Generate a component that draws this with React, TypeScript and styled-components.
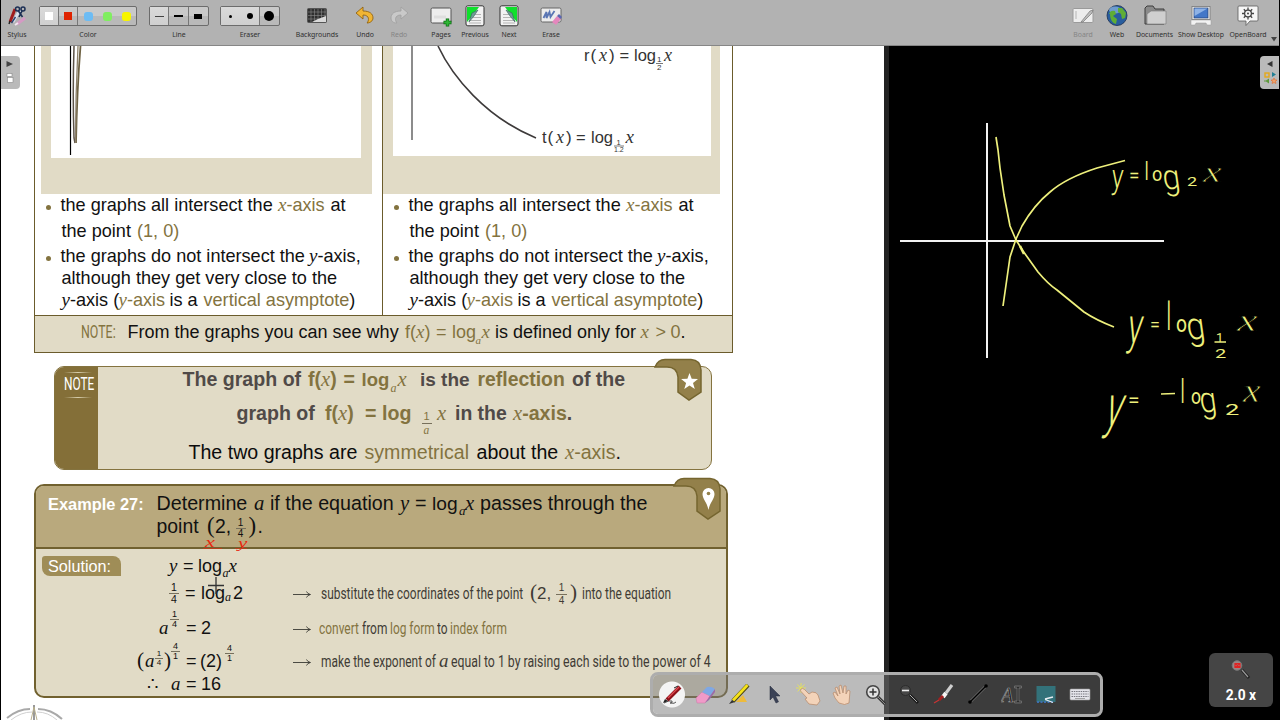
import React from "react";
import styled, { createGlobalStyle } from "styled-components";

const olive = "#83733f";
const sand = "#e1dbc6";
const line = "#6b5c2c";

const Global = createGlobalStyle`
  html, body { margin: 0; padding: 0; background: #000; }
  * { box-sizing: border-box; }
`;

const Screen = styled.div`
  position: relative;
  width: 1280px;
  height: 720px;
  padding: 0 1px;
  overflow: hidden;
  background: #000;
  display: flex;
  flex-direction: column;
  font-family: "Liberation Sans", Arial, sans-serif;
`;

/* ---------- top toolbar ---------- */
const TopBar = styled.header`
  height: 46px;
  flex: none;
  display: flex;
  background: #b2b2b2;
  border-bottom: 1px solid #868686;
`;
const Spacer = styled.div`
  flex: 1;
`;
const Tool = styled.div<{ $w: number; $ml?: number; $dim?: boolean }>`
  width: ${(p) => p.$w}px;
  margin-left: ${(p) => p.$ml ?? 0}px;
  flex: none;
  display: flex;
  flex-direction: column;
  align-items: center;
  color: ${(p) => (p.$dim ? "#858585" : "#303030")};
  font: 6.9px/10px "Noto Sans", sans-serif;
  white-space: nowrap;
`;
const IconSlot = styled.div`
  height: 30px;
  padding-top: 5px;
  svg { display: block; }
`;
const Segments = styled.div`
  height: 20px;
  margin: 6px 0 4px;
  display: flex;
  border: 1px solid #6c6c6c;
  border-radius: 2px;
  background: linear-gradient(#c9c9c9 48%, #b9b9b9 52%);
`;
const Segment = styled.div<{ $on?: boolean; $line?: boolean }>`
  width: 19.4px;
  display: flex;
  align-items: center;
  justify-content: center;
  background: ${(p) => (p.$on ? "linear-gradient(#dadada, #cfcfcf)" : "none")};
  border-right: ${(p) => (p.$line ? "1px solid #777" : "0")};
`;
const Swatch = styled.i<{ $c: string; $w: number; $h: number; $r?: number }>`
  width: ${(p) => p.$w}px;
  height: ${(p) => p.$h}px;
  background: ${(p) => p.$c};
  border-radius: ${(p) => p.$r ?? 0}px;
`;
const Caret = styled.div`
  width: 10px;
  padding: 37px 0 0 2px;
  svg { display: block; }
`;

/* ---------- workspace ---------- */
const Workspace = styled.main`
  flex: 1;
  min-height: 0;
  display: flex;
`;
const Page = styled.section`
  position: relative;
  width: 883px;
  flex: none;
  background: #fff;
  padding-left: 33px;
  overflow: hidden;
`;
const Gutter = styled.div`
  width: 5px;
  flex: none;
  background: #222;
`;
const Board = styled.section`
  flex: 1;
  background: #000;
  svg { display: block; }
`;

const Table = styled.div`
  width: 699px;
  height: 307px;
  border: 1px solid ${line};
  border-top: 0;
`;
const Columns = styled.div`
  display: flex;
  height: 270px;
  border-bottom: 1px solid ${line};
`;
const Column = styled.div<{ $w: number; $pl: number; $divider?: boolean }>`
  width: ${(p) => p.$w}px;
  padding-left: ${(p) => p.$pl}px;
  border-right: ${(p) => (p.$divider ? `1px solid ${line}` : "0")};
`;
const Figure = styled.div<{ $w: number; $b: string }>`
  width: ${(p) => p.$w}px;
  height: 148px;
  border-style: solid;
  border-color: ${sand};
  border-width: ${(p) => p.$b};
  svg { display: block; overflow: visible; }
`;
const PointList = styled.div<{ $pl: number }>`
  padding-left: ${(p) => p.$pl}px;
`;
const Row = styled.div<{ $h: number; $pl?: number; $size?: number; $bold?: boolean; $c?: string }>`
  height: ${(p) => p.$h}px;
  line-height: ${(p) => p.$h}px;
  padding-left: ${(p) => p.$pl ?? 0}px;
  font-size: ${(p) => p.$size ?? 18.1}px;
  font-weight: ${(p) => (p.$bold ? 700 : 400)};
  color: ${(p) => p.$c ?? "#111"};
  display: flex;
  align-items: baseline;
  white-space: pre;
`;
const Seg = styled.span<{ $w?: number; $c?: string; $bold?: boolean; $size?: number }>`
  flex: none;
  width: ${(p) => (p.$w ? `${p.$w}px` : "auto")};
  ${(p) => (p.$c ? `color: ${p.$c};` : "")}
  ${(p) => (p.$bold ? "font-weight: 700;" : "")}
  ${(p) => (p.$size ? `font-size: ${p.$size}px;` : "")}
`;
const Narrow = styled.span<{ $k?: number; $size?: number }>`
  display: inline-block;
  font-family: Roboto, "Liberation Sans", sans-serif;
  font-size: ${(p) => p.$size ?? 15.6}px;
  transform: scaleX(${(p) => p.$k ?? 0.765});
  transform-origin: 0 50%;
`;
const Em = styled.em`
  font-family: "Liberation Serif", "Times New Roman", serif;
  font-weight: 400;
  font-size: 1.05em;
  line-height: 0;
`;
const Sub = styled.em<{ $d?: number; $s?: number }>`
  font-family: "Liberation Serif", "Times New Roman", serif;
  font-weight: 400;
  font-size: ${(p) => p.$s ?? 12}px;
  line-height: 0;
  vertical-align: ${(p) => -(p.$d ?? 5)}px;
`;
const Tall = styled.span`
  display: inline-block;
  line-height: 0;
  font-family: "Liberation Serif", serif;
  font-weight: 400;
  font-size: 1.18em;
`;
const FracBox = styled.span<{ $v: number; $s: number; $w: number; $lh: number }>`
  display: inline-flex;
  flex-direction: column;
  align-items: center;
  width: ${(p) => p.$w}px;
  margin: -20px 0;
  vertical-align: ${(p) => p.$v}px;
  font-size: ${(p) => p.$s}px;
  line-height: ${(p) => p.$lh};
  font-weight: 400;
  color: inherit;
  b { font-weight: 400; align-self: stretch; text-align: center; border-bottom: 1px solid #77705c; }
`;
const Frac = ({ n, d, v = 4, s = 10, w = 10, lh = 1.05 }: { n: React.ReactNode; d: React.ReactNode; v?: number; s?: number; w?: number; lh?: number }) => (
  <FracBox $v={v} $s={s} $w={w} $lh={lh}>
    <b>{n}</b>
    <span>{d}</span>
  </FracBox>
);
const Dot = styled.i`
  flex: none;
  align-self: center;
  width: 5px;
  height: 5px;
  margin: 3px 10px 0 2px;
  border-radius: 50%;
  background: ${olive};
`;
const TableNote = styled.div`
  background: ${sand};
  height: 36px;
`;

const NoteCard = styled.div`
  position: relative;
  width: 658px;
  height: 104px;
  margin: 13px 0 0 20px;
  display: flex;
  border: 1px solid #84733f;
  border-radius: 10px;
  background: ${sand};
`;
const NoteBand = styled.div`
  width: 43px;
  flex: none;
  padding: 5px 0 0 9px;
  border-radius: 9px 0 0 9px;
  background: #846f38;
  color: #fff;
`;
const NoteLabel = styled.div`
  width: 30px;
  height: 26px;
  line-height: 24px;
  background:
    linear-gradient(90deg, transparent, #d8cfae, transparent) 0 0 / 28px 1px no-repeat,
    linear-gradient(90deg, transparent, #d8cfae, transparent) 0 25px / 28px 1px no-repeat;
`;
const NoteBody = styled.div`
  flex: 1;
`;
const Ribbon = styled.svg<{ $r: number }>`
  position: absolute;
  top: -9px;
  right: ${(p) => p.$r}px;
`;

const Example = styled.div`
  position: relative;
  width: 694px;
  height: 214px;
  margin-top: 14px;
  border: 2px solid #71612f;
  border-radius: 10px;
  background: ${sand};
`;
const ExampleHead = styled.div`
  height: 63px;
  padding: 5px 0 0 12px;
  border-bottom: 2px solid #71612f;
  border-radius: 8px 8px 0 0;
  background: #b9a97d;
`;
const Body = styled.div`
  display: flex;
  padding: 3px 0 0 6px;
`;
const Tag = styled.div`
  flex: none;
  width: 79px;
  height: 20px;
  margin-top: 4px;
  padding-left: 6px;
  border-radius: 3px 8px 0 8px;
  background: #9f8d57;
  color: #fff;
  font-size: 16.2px;
  line-height: 20px;
`;
const Work = styled.div`
  flex: 1;
  min-width: 0;
`;
const Overlay = styled.svg<{ $x: number; $y: number }>`
  position: absolute;
  left: ${(p) => p.$x}px;
  top: ${(p) => p.$y}px;
  overflow: visible;
`;

/* ---------- floating parts ---------- */
const SideTab = styled.div<{ $side: "left" | "right" }>`
  position: absolute;
  top: 56px;
  ${(p) => p.$side}: 1px;
  width: 19px;
  height: 33px;
  background: #bababa;
  border-radius: ${(p) => (p.$side === "left" ? "0 4px 4px 0" : "4px 0 0 4px")};
  svg { display: block; }
`;
const Palette = styled.div`
  position: absolute;
  left: 650px;
  top: 672px;
  width: 453px;
  height: 45px;
  padding: 0 2px;
  display: flex;
  align-items: center;
  border-radius: 8px;
  border: 3px solid #adadad;
  background: rgba(120, 120, 120, 0.5);
  background-clip: padding-box;
`;
const PaletteItem = styled.div<{ $on?: boolean }>`
  width: 34px;
  height: 27px;
  flex: none;
  display: flex;
  align-items: center;
  justify-content: center;
  background: ${(p) => (p.$on ? "radial-gradient(circle, #f4f4f4 0 12.5px, transparent 13.5px)" : "none")};
`;
const ZoomBadge = styled.div`
  position: absolute;
  left: 1209px;
  top: 653px;
  width: 64px;
  height: 54px;
  padding-top: 5px;
  display: flex;
  flex-direction: column;
  align-items: center;
  border-radius: 6px;
  background: #454545;
  color: #fff;
  font: 700 13.8px/21px Roboto, sans-serif;
`;

const Ic = ({ w = 22, h = 22, children }: { w?: number; h?: number; children: React.ReactNode }) => (
  <svg width={w} height={h} viewBox={`0 0 ${w} ${h}`} fill="none">
    {children}
  </svg>
);

const StylusIcon = () => (
  <Ic>
    <path d="M4 17 9 4" stroke="#a01c1c" strokeWidth="3" />
    <path d="M3 19 4 16" stroke="#222" strokeWidth="1.4" />
    <path d="m7 17 7-12" stroke="#d9e1ee" strokeWidth="2.6" />
    <path d="m5.500 18 4-6" stroke="#2c3f6e" strokeWidth="1.400" />
    <circle cx="11.500" cy="4" r="2" stroke="#1c2f55" strokeWidth="1.500" />
    <circle cx="17" cy="4" r="2" stroke="#1c2f55" strokeWidth="1.500" />
    <path d="m12.500 6 4 6M16 6l-3 6" stroke="#1c2f55" strokeWidth="1.600" />
    <path d="m11 19 8-6" stroke="#d59ac4" strokeWidth="3.400" />
    <path d="m9 20 3-2" stroke="#f2e6f0" strokeWidth="2" />
  </Ic>
);
const BackgroundsIcon = () => (
  <Ic>
    <rect x="1.500" y="3.500" width="19" height="14" rx="1" fill="#303030" stroke="#555" />
    <path d="M5 4v13M8.500 4v13M12 4v13M15.500 4v13M19 4v13M2 7h18M2 10.500h18M2 14h18" stroke="#8a8a8a" strokeWidth=".6" />
    <path d="m6 17 6-3 8-3v6z" fill="#d9d9d9" />
  </Ic>
);
const UndoIcon = ({ dim }: { dim?: boolean }) => (
  <Ic>
    <path
      d={dim ? "m20 8-7-6v4C6 6 3 9 3 13c0 3 2 5 6 5-2-2-3-8 4-8v4z" : "m2 8 7-6v4c7 0 10 3 10 7 0 3-3 5-6 5 2-2 3-8-4-8v4z"}
      fill={dim ? "#c9c9c9" : "#f0b534"}
      stroke={dim ? "#9e9e9e" : "#8a5a08"}
      strokeWidth=".8"
    />
  </Ic>
);
const PagesIcon = () => (
  <Ic>
    <rect x="1" y="3" width="20" height="15" rx="1.500" fill="#ededed" stroke="#555" />
    <path d="M4 12h12" stroke="#dedede" strokeWidth="3" />
    <path d="M17.500 13.500v8M13.500 17.500h8" stroke="#0c6b12" strokeWidth="3.400" />
    <path d="M17.500 14.200v6.600M14.200 17.500h6.600" stroke="#2fb636" strokeWidth="2" />
  </Ic>
);
const TurnIcon = ({ next }: { next?: boolean }) => (
  <Ic>
    <rect x="2" y=".8" width="18" height="20" rx="1.800" fill="#f2f2f2" stroke="#333" />
    <path d="M5 9.500h12M5 12.500h12M5 15.500h12M5 18h12" stroke="#a5a5a5" strokeWidth=".8" />
    <g transform={next ? "matrix(-1 0 0 1 22 0)" : undefined}>
      <path d="M3 2h12L9 10l-6 7z" fill="#0fe02c" />
      <path d="m5 17 3-9 6-3-4 6z" fill="#6f9d94" stroke="#35635c" strokeWidth=".6" />
    </g>
  </Ic>
);
const EraseIcon = () => (
  <Ic>
    <rect x="1" y="3" width="20" height="14" rx="1.500" fill="#ececec" stroke="#666" />
    <path d="m3.500 13 3-6v6l3-6 1 5 4-6" stroke="#5a76b4" strokeWidth="1.800" />
    <path d="m12 17 5-6 4 3-5 6z" fill="#e487bd" />
    <path d="m17 11 2-2 3 3-1.500 2z" fill="#5b67b0" />
  </Ic>
);
const BoardIcon = () => (
  <Ic>
    <rect x="1" y="3.500" width="20" height="14" rx="1" fill="#ededed" stroke="#9a9a9a" />
    <path d="M4 6v8" stroke="#b5b5b5" />
    <path d="m9 17 9-11 3-1-1 3-9 9z" fill="#bdbdbd" stroke="#777" strokeWidth=".7" />
  </Ic>
);
const WebIcon = () => (
  <Ic>
    <circle cx="11" cy="10.500" r="10" fill="#285d9e" stroke="#1a2f50" strokeWidth=".8" />
    <ellipse cx="9" cy="5" rx="6" ry="3.500" fill="#8bb8e2" opacity=".7" />
    <path d="M3 9c1-3 3-4 6-3l1 3-3 2 4 3-1 5c-4-1-6-5-6-10zM12 3l4 0 4 5-1 5-3 1-1-5-3-2z" fill="#5fae35" />
  </Ic>
);
const DocsIcon = () => (
  <Ic w={24}>
    <path d="M2 19V3l2-2h6l2 3h9v15z" fill="#8a8a8a" stroke="#3c3c3c" />
    <path d="M4 19V9l4-3h15v13z" fill="#cfcfcf" stroke="#777" strokeWidth=".6" />
  </Ic>
);
const DesktopIcon = () => (
  <Ic>
    <path d="M1 15h20v5h-4l-1-2H6l-1 2H1z" fill="#f2f2f2" stroke="#999" strokeWidth=".5" />
    <rect x="2" y="1.500" width="18" height="13" fill="#f2f2f2" stroke="#777" strokeWidth=".8" />
    <rect x="4" y="3" width="14" height="10" fill="#4377c8" stroke="#26406f" strokeWidth=".7" />
    <path d="M4.500 3.500h13L4.500 11z" fill="#8eb2e6" />
  </Ic>
);
const OpenBoardIcon = () => (
  <Ic>
    <path d="M2 1h18q1 0 1 1v13q0 1-1 1h-7l-4 4.500V16H2q-1 0-1-1V2q0-1 1-1z" fill="#f6f6f6" stroke="#5c5c5c" strokeWidth=".8" />
    <circle cx="11" cy="8.500" r="3.400" stroke="#444" strokeWidth="1.300" />
    <path d="M11 2.500v2.500M11 12v2.500M5 8.500h2.500M14.500 8.500H17M6.800 4.300l1.700 1.700M13.500 11l1.700 1.700M15.200 4.300 13.500 6M8.500 11l-1.700 1.700" stroke="#444" strokeWidth="1.300" />
    <circle cx="11" cy="8.500" r="1" fill="#444" />
  </Ic>
);

const IconTool = ({ label, w = 34, ml, dim, children }: { label: string; w?: number; ml?: number; dim?: boolean; children: React.ReactNode }) => (
  <Tool $w={w} $ml={ml} $dim={dim}>
    <IconSlot>{children}</IconSlot>
    {label}
  </Tool>
);

/* ---------- pen strokes on the dark board ---------- */
type InkMark = [ch: string, x: number, y: number, size: number, sx: number, skew?: number, serif?: boolean];
const ink: InkMark[] = [
  ["y", 1111, 188, 34, 0.72, -4],
  ["=", 1129, 181.5, 19, 1],
  ["l", 1144, 180, 26, 0.9],
  ["o", 1152, 180.5, 20, 0.9],
  ["g", 1164, 189, 35, 0.9, 8],
  ["2", 1187, 186, 12, 1.5],
  ["x", 1203, 182, 30, 1.4, 0, true],
  ["y", 1126, 343, 50, 0.62, -8],
  ["=", 1150, 330.5, 18, 1],
  ["l", 1166, 330, 38, 0.65],
  ["o", 1176, 331.5, 24, 0.8],
  ["g", 1188, 339, 38, 0.88, 8],
  ["1", 1216, 341.5, 13, 1],
  ["2", 1215, 358, 12.5, 1.6],
  ["x", 1237, 330.5, 31, 1.5, 0, true],
  ["y", 1103, 426, 58, 0.6, -14],
  ["=", 1128, 407, 21, 1],
  ["l", 1180, 403, 33, 0.7],
  ["o", 1191, 403.5, 22, 0.8],
  ["g", 1201, 412, 36, 0.85, 8],
  ["2", 1225, 414.500, 15, 1.7],
  ["x", 1243, 402, 33, 1.2, 0, true],
];

const Sketch = () => (
  <svg width="390" height="674" viewBox="889 46 390 674" fill="none">
    <path d="M987 123V358M900 241H1164" stroke="#f2f2f2" strokeWidth="2" />
    <g stroke="#eef07c" strokeWidth="1.700" strokeLinejoin="round">
      <path d="M1003 306 1005 292 1010 257 1014 245 1016 239 1022 226Q1034 205 1050 192 1066 178 1097 168L1125 160.500" />
      <path d="M996 137 998 150 1000 168 1004 195 1010 226 1016 240 1023 251 1038 272Q1048 284 1057 290L1084 312Q1096 320 1114 327" />
      <path d="M1020 246 1024 254" strokeWidth="2.500" />
      <path d="M1214.500 342H1226M1161 394 1175 393.500" />
    </g>
    {ink.map(([ch, x, y, size, sx, skew = 0, serif], i) => (
      <text
        key={i}
        transform={`translate(${x} ${y}) skewX(${skew}) scale(${sx} 1)`}
        fontSize={size}
        fontFamily={serif ? "Liberation Serif, serif" : "Roboto, sans-serif"}
        fontStyle={serif ? "italic" : "normal"}
        fontWeight={size < 26 && !serif ? 400 : 300}
        fill="#eef07c"
        stroke={serif ? "#000" : "none"}
        strokeWidth={serif ? 0.8 : 0}
      >
        {ch}
      </text>
    ))}
  </svg>
);

const RibbonShape = () => (
  <path d="M1 9Q4 1.500 11 1.500H37Q46.500 2 47 12V34L35 42 24 34V19Q23 9 13 9Z" fill="#93804a" stroke="#75652f" strokeWidth="1.500" />
);

const Points = ({ indent }: { indent: number }) => (
  <PointList $pl={indent}>
    <Row $h={23}><Dot /><Seg $w={217.5}>the graphs all intersect the </Seg><Seg $w={47.5} $c={olive}><Em>x</Em>-axis</Seg><Seg> at</Seg></Row>
    <Row $h={28} $pl={18}><Seg $w={75.5}>the point </Seg><Seg $c={olive}>(1, 0)</Seg></Row>
    <Row $h={23}><Dot /><Seg $w={248.5}>the graphs do not intersect the </Seg><Seg><Em>y</Em>-axis,</Seg></Row>
    <Row $h={21} $pl={18}><Seg>although they get very close to the</Seg></Row>
    <Row $h={22} $pl={18}><Seg $w={57}><Em>y</Em>-axis (</Seg><Seg $w={51} $c={olive}><Em>y</Em>-axis </Seg><Seg $w={34}>is a </Seg><Seg $c={olive}>vertical asymptote</Seg><Seg>)</Seg></Row>
  </PointList>
);

const Arrow = ({ w = 28 }: { w?: number }) => (
  <Seg $w={w}>
    <svg width="18" height="9" viewBox="0 0 18 9" fill="none"><path d="M0 4.500H17M13.500 1.500Q14.500 4 17.500 4.500 14.500 5 13.500 7.500" stroke="#3a3a34" strokeWidth=".9" /></svg>
  </Seg>
);

const dark = "#3f3b35";

const App = () => (
  <Screen>
    <Global />
    <TopBar>
      <IconTool label="Stylus" w={32}><StylusIcon /></IconTool>
      <Tool $w={98} $ml={6}>
        <Segments>
          <Segment $on $line><Swatch $c="#fff" $w={8} $h={8} /></Segment>
          <Segment $line><Swatch $c="#df2300" $w={8} $h={8} /></Segment>
          <Segment><Swatch $c="#6cbcf4" $w={9} $h={9} $r={3} /></Segment>
          <Segment><Swatch $c="#80ee60" $w={9} $h={9} $r={3} /></Segment>
          <Segment><Swatch $c="#f8f500" $w={9} $h={9} $r={3} /></Segment>
        </Segments>
        Color
      </Tool>
      <Tool $w={60} $ml={12}>
        <Segments>
          <Segment $on $line><Swatch $c="#444" $w={9} $h={1} /></Segment>
          <Segment $line><Swatch $c="#000" $w={9} $h={2} /></Segment>
          <Segment><Swatch $c="#000" $w={8} $h={5} /></Segment>
        </Segments>
        Line
      </Tool>
      <Tool $w={60} $ml={11}>
        <Segments>
          <Segment $on><Swatch $c="#000" $w={3} $h={3} $r={2} /></Segment>
          <Segment $on $line><Swatch $c="#000" $w={6} $h={6} $r={3} /></Segment>
          <Segment><Swatch $c="#000" $w={10} $h={10} $r={5} /></Segment>
        </Segments>
        Eraser
      </Tool>
      <IconTool label="Backgrounds" w={44} ml={15}><BackgroundsIcon /></IconTool>
      <IconTool label="Undo" ml={9}><UndoIcon /></IconTool>
      <IconTool label="Redo" dim><UndoIcon dim /></IconTool>
      <IconTool label="Pages" ml={8}><PagesIcon /></IconTool>
      <IconTool label="Previous"><TurnIcon /></IconTool>
      <IconTool label="Next"><TurnIcon next /></IconTool>
      <IconTool label="Erase" ml={8}><EraseIcon /></IconTool>
      <Spacer />
      <IconTool label="Board" dim><BoardIcon /></IconTool>
      <IconTool label="Web"><WebIcon /></IconTool>
      <IconTool label="Documents" w={41}><DocsIcon /></IconTool>
      <IconTool label="Show Desktop" w={52}><DesktopIcon /></IconTool>
      <IconTool label="OpenBoard" w={42}><OpenBoardIcon /></IconTool>
      <Caret><svg width="6" height="5"><path d="M0 0H6L3 4.500Z" fill="#444" /></svg></Caret>
    </TopBar>

    <Workspace>
      <Page>
        <Table>
          <Columns>
            <Column $w={348} $pl={6} $divider>
              <Figure $w={331} $b="0 11px 36px 10px">
                <svg width="310" height="112" viewBox="51 46 310 112" fill="none">
                  <path d="M70.500 46V155" stroke="#000" strokeWidth="1.200" />
                  <path d="M74 46Q72.500 95 74 138L75 143" stroke="#5b5248" strokeWidth="1.500" />
                  <path d="M80.500 46Q77 90 76 143" stroke="#6f6344" strokeWidth="1.800" />
                  <path d="M78 46Q75.500 95 75.500 143" stroke="#8c806a" strokeWidth="1.300" />
                </svg>
              </Figure>
              <Points indent={2.5} />
            </Column>
            <Column $w={349} $pl={0}>
              <Figure $w={337} $b="0 9px 38px 10px">
                <svg width="318" height="110" viewBox="393 46 318 110" fill="none" fontFamily="Liberation Sans, sans-serif">
                  <path d="M412 46V140" stroke="#666" strokeWidth="1.500" />
                  <path d="M438 46C452 76 485 117 536 138" stroke="#3d3a3a" strokeWidth="1.600" />
                  <g fill="#333" fontSize="16.500">
                    <text y="60.500" x="584">r</text>
                    <text y="60.500" x="590.500" fontSize="17">(</text>
                    <text y="60.500" x="599" fontFamily="Liberation Serif" fontStyle="italic" fontSize="18">x</text>
                    <text y="60.500" x="609" fontSize="17">)</text>
                    <text y="60.500" x="619.500">=</text>
                    <text y="60.500" x="634">log</text>
                    <text y="62" x="657" fontSize="8">1</text>
                    <text y="70" x="657" fontSize="8">2</text>
                    <text y="61" x="664" fontFamily="Liberation Serif" fontStyle="italic" fontSize="18">x</text>
                    <text y="142.500" x="542">t</text>
                    <text y="142.500" x="547.500" fontSize="17">(</text>
                    <text y="142.500" x="556" fontFamily="Liberation Serif" fontStyle="italic" fontSize="18">x</text>
                    <text y="142.500" x="566" fontSize="17">)</text>
                    <text y="142.500" x="576">=</text>
                    <text y="142.500" x="591">log</text>
                    <text y="145" x="616.500" fontSize="7.500">1</text>
                    <text y="152" x="614" fontSize="7">1.2</text>
                    <text y="143" x="625.500" fontFamily="Liberation Serif" fontStyle="italic" fontSize="19">x</text>
                  </g>
                  <path d="M656 63.500H663M614 146H624" stroke="#555" strokeWidth=".8" />
                </svg>
              </Figure>
              <Points indent={8.5} />
            </Column>
          </Columns>
          <TableNote>
            <Row $h={33} $pl={46} $size={18}>
              <Seg $w={46.5} $c={olive}><Narrow $size={18.5} $k={0.67}>NOTE:</Narrow></Seg>
              <Seg $w={277.5}>From the graphs you can see why </Seg>
              <Seg $w={31} $c={olive}>f(<Em>x</Em>)</Seg>
              <Seg $w={16} $c={olive}>=</Seg>
              <Seg $w={23.5} $c={olive}>log</Seg>
              <Seg $w={6} $c={olive}><Sub $s={11} $d={6}>a</Sub></Seg>
              <Seg $w={13.5} $c={olive}><Em>x</Em></Seg>
              <Seg $w={145.5}>is defined only for </Seg>
              <Seg $w={15} $c={olive}><Em>x</Em></Seg>
              <Seg $w={15} $c={olive}>&gt;</Seg>
              <Seg $c={olive}>0</Seg><Seg>.</Seg>
            </Row>
          </TableNote>
        </Table>

        <NoteCard>
          <NoteBand><NoteLabel><Narrow $size={17.5} $k={0.68}>NOTE</Narrow></NoteLabel></NoteBand>
          <NoteBody>
            <Row $h={25} $pl={84.5} $size={19.6} $bold $c="#504a48">
              <Seg $w={125.5}>The graph of </Seg>
              <Seg $w={35.5} $c={olive}>f(<Em>x</Em>)</Seg>
              <Seg $w={18} $c={olive}>=</Seg>
              <Seg $w={29} $c={olive} $size={18.5}>log</Seg>
              <Seg $w={7} $c={olive}><Sub $d={6}>a</Sub></Seg>
              <Seg $w={22.5} $c={olive}><Em>x</Em></Seg>
              <Seg $w={57.5} $size={19}>is the </Seg>
              <Seg $w={94.5} $c={olive} $size={19.4}>reflection </Seg>
              <Seg $size={19.5}>of the</Seg>
            </Row>
            <Row $h={43} $pl={138.5} $size={19.6} $bold $c="#504a48">
              <Seg $w={88.5}>graph of</Seg>
              <Seg $w={40} $c={olive}>f(<Em>x</Em>)</Seg>
              <Seg $w={17} $c={olive}>=</Seg>
              <Seg $w={39.5} $c={olive}>log</Seg>
              <Seg $w={15.5} $c={olive}><Frac n="1" d={<Em>a</Em>} v={0} s={11} w={10} lh={1.2} /></Seg>
              <Seg $w={18} $c={olive}><Em>x</Em></Seg>
              <Seg $w={58} $size={19.4}>in the </Seg>
              <Seg $c={olive} $size={19.6}><Em>x</Em>-axis</Seg><Seg>.</Seg>
            </Row>
            <Row $h={34} $pl={90.5} $size={19.6} $c="#0c0c0c">
              <Seg $w={176}>The two graphs are </Seg>
              <Seg $w={112} $c={olive} $size={19.6}>symmetrical </Seg>
              <Seg $w={88.5} $size={19.6}>about the </Seg>
              <Seg $c={olive} $size={19.6}><Em>x</Em>-axis</Seg><Seg>.</Seg>
            </Row>
          </NoteBody>
          <Ribbon $r={9} width="48" height="44">
            <RibbonShape />
            <path d="m35.500 15 2.200 5.800 6.300.2-5 3.900 1.800 6-5.300-3.500-5.200 3.500 1.800-6-5-3.900 6.300-.2z" fill="#fff" />
          </Ribbon>
        </NoteCard>

        <Example>
          <ExampleHead>
            <Row $h={24} $size={19.7}>
              <Seg $w={108.5} $c="#fff" $bold $size={16.4}>Example 27:</Seg>
              <Seg $w={97.5}>Determine </Seg>
              <Seg $w={16}><Em>a</Em></Seg>
              <Seg $w={130}>if the equation </Seg>
              <Seg $w={15}><Em>y</Em></Seg>
              <Seg $w={17}>=</Seg>
              <Seg $w={27} $size={19.2}>log</Seg>
              <Seg $w={6}><Sub $s={13}>a</Sub></Seg>
              <Seg $w={15}><Em>x</Em></Seg>
              <Seg>passes through the</Seg>
            </Row>
            <Row $h={23} $pl={108.5} $size={19.4}>
              <Seg $w={50.5}>point</Seg>
              <Seg $w={8}><Tall>(</Tall></Seg>
              <Seg $w={20.5}>2,</Seg>
              <Seg $w={13}><Frac n="1" d="4" v={7.5} s={10} w={10} /></Seg>
              <Seg $w={9}><Tall>)</Tall></Seg>
              <Seg>.</Seg>
            </Row>
          </ExampleHead>
          <Body>
            <Tag>Solution:</Tag>
            <Work>
              <Row $h={28} $pl={48} $size={18}>
                <Seg $w={14}><Em>y</Em></Seg><Seg $w={15}>=</Seg><Seg $w={24.5}>log</Seg><Seg $w={6}><Sub $s={12}>a</Sub></Seg><Seg><Em>x</Em></Seg>
              </Row>
              <Row $h={26} $pl={48} $size={18}>
                <Seg $w={16}><Frac n="1" d="4" v={8.5} s={10.5} w={10} lh={1.1} /></Seg><Seg $w={16}>=</Seg><Seg $w={24}>log</Seg><Seg $w={8}><Sub $s={12} $d={2}>a</Sub></Seg><Seg $w={60}>2</Seg>
                <Arrow />
                <Seg $w={209} $c={dark}><Narrow>substitute the coordinates of the point</Narrow></Seg>
                <Seg $w={7} $c={dark}><Tall>(</Tall></Seg>
                <Seg $w={19} $c={dark} $size={17}>2,</Seg>
                <Seg $w={14} $c={dark}><Frac n="1" d="4" v={8} s={10} w={11} lh={1.15} /></Seg>
                <Seg $w={12} $c={dark}><Tall>)</Tall></Seg>
                <Seg $c={dark}><Narrow>into the equation</Narrow></Seg>
              </Row>
              <Row $h={44} $pl={38} $size={18}>
                <Seg $w={11}><Em>a</Em></Seg><Seg $w={16}><Frac n="1" d="4" v={17} s={9} w={9} /></Seg><Seg $w={15}>=</Seg><Seg $w={92}>2</Seg>
                <Arrow w={25.5} />
                <Seg $w={43.5} $c={olive}><Narrow>convert</Narrow></Seg>
                <Seg $w={28} $c={dark}><Narrow>from</Narrow></Seg>
                <Seg $w={47} $c={olive}><Narrow>log form</Narrow></Seg>
                <Seg $w={13} $c={dark}><Narrow>to</Narrow></Seg>
                <Seg $c={olive}><Narrow>index form</Narrow></Seg>
              </Row>
              <Row $h={23} $pl={16} $size={18}>
                <Seg $w={8}><Tall>(</Tall></Seg><Seg $w={10}><Em>a</Em></Seg><Seg $w={9}><Frac n="1" d="4" v={11} s={8} w={8} lh={0.95} /></Seg><Seg $w={7}><Tall>)</Tall></Seg>
                <Seg $w={15}><Frac n="4" d="1" v={18.5} s={9} w={9} /></Seg><Seg $w={14}>=</Seg><Seg $w={25}>(2)</Seg><Seg $w={68}><Frac n="4" d="1" v={16.5} s={9} w={9} /></Seg>
                <Arrow />
                <Seg $w={118} $c={dark}><Narrow>make the exponent of</Narrow></Seg>
                <Seg $w={12} $c={dark}><Em>a</Em></Seg>
                <Seg $c={dark}><Narrow $k={0.787}>equal to 1 by raising each side to the power of 4</Narrow></Seg>
              </Row>
              <Row $h={23} $pl={26} $size={18}>
                <Seg $w={24}>∴</Seg><Seg $w={15}><Em>a</Em></Seg><Seg $w={15}>=</Seg><Seg>16</Seg>
              </Row>
            </Work>
          </Body>
          <Ribbon $r={5} width="48" height="44">
            <RibbonShape />
            <path d="M35.500 33C34 25 29.500 22 29.500 17a6 6 0 0 1 12 0c0 5-4.500 8-6 16z" fill="#fff" />
            <circle cx="35.500" cy="16.500" r="1.800" fill="#93804a" />
          </Ribbon>
        </Example>

        <Overlay $x={202} $y={490} width="50" height="20">
          <text transform="translate(2 10.500) scale(1.5 1)" fontSize="15" fontStyle="italic" fontFamily="Liberation Serif" fill="#e8290f">x</text>
          <text transform="translate(35 11.500) scale(1.4 1)" fontSize="15" fontStyle="italic" fontFamily="Liberation Serif" fill="#e8290f">y</text>
          <path d="M0 12.500H19M32 12.500H44" stroke="#b5401c" strokeWidth="1.200" />
        </Overlay>
        <Overlay $x={207} $y={531} width="17" height="17">
          <path d="M8 0V17M0 8.500H16" stroke="#333" strokeWidth="1.300" />
        </Overlay>
        <Overlay $x={0} $y={658} width="64" height="18" fill="none">
          <path d="M33 1V18" stroke="#777" strokeWidth="1.500" />
          <path d="M33 3 36 16M33 3 30 16" stroke="#b9b08d" />
          <path d="M6 14Q17 5 29 5M37 5Q50 5 61 15" stroke="#a9a9a9" strokeWidth="2" />
          <path d="M10 16Q20 8 31 8M36 8Q47 8 56 16" stroke="#d0d0d0" />
        </Overlay>
      </Page>
      <Gutter />
      <Board><Sketch /></Board>
    </Workspace>

    <SideTab $side="left">
      <svg width="19" height="33" fill="none">
        <path d="M5.500 5 12 8 5.500 11Z" fill="#444" />
        <rect x="6" y="17.500" width="5" height="3" fill="#fff" stroke="#888" strokeWidth=".6" />
        <rect x="6.500" y="21.500" width="5.500" height="5" fill="#fff" stroke="#888" strokeWidth=".6" />
      </svg>
    </SideTab>
    <SideTab $side="right">
      <svg width="19" height="33" fill="none">
        <path d="M12.500 5 7 8 12.500 11Z" fill="#333" />
        <rect x="5" y="17" width="4" height="4" stroke="#e5a91a" strokeWidth="1.400" />
        <path d="m12 16 4 2.500-4 2.500z" fill="#227f94" />
        <path d="M4 24.500h2l3-2v5l-3-2H4z" fill="#5f9a3c" />
        <path d="m14 22 1 2h2l-1.500 1.500.5 2-2-1-2 1 .5-2L11 24h2z" fill="#f0a26a" stroke="#dd6b2f" strokeWidth=".6" />
      </svg>
    </SideTab>

    <Palette>
      <PaletteItem $on>
        <Ic w={24} h={24}>
          <path d="M4 20q5-3 8-2 1 2-2 2 5 1 6-1" stroke="#555" />
          <path d="M7 17 20 4" stroke="#8d1019" strokeWidth="4" />
          <path d="M8 15 19 4" stroke="#e04a50" strokeWidth="1.200" />
          <path d="m3 20 2-4 3 2z" fill="#222" />
          <path d="M14 5 18 3" stroke="#222" />
        </Ic>
      </PaletteItem>
      <PaletteItem>
        <Ic>
          <path d="m1 14 6-6 8 4-5 7H2z" fill="#f09ac8" stroke="#c878a6" strokeWidth=".5" />
          <path d="m7 8 5-5q4-1 8 2l-5 7z" fill="#7fa8e4" />
          <path d="m15 12 5-7v3l-6 8-4 3z" fill="#9b6aa8" />
        </Ic>
      </PaletteItem>
      <PaletteItem>
        <Ic>
          <path d="m7 18 7-7 4 7z" fill="#eebb3c" />
          <path d="M4 17 19 1" stroke="#4e4712" strokeWidth="4.200" />
          <path d="M4 16.500 18.500 1" stroke="#f5e21b" strokeWidth="2.800" />
          <path d="m0 20 3-4 3 2z" fill="#333" />
        </Ic>
      </PaletteItem>
      <PaletteItem>
        <Ic>
          <path d="M7 2v14l3-3 3 6 2.500-1.200-3-5.800H17z" fill="#3b4256" stroke="#22283a" strokeWidth=".5" />
        </Ic>
      </PaletteItem>
      <PaletteItem>
        <Ic w={26} h={24}>
          <path d="M6 0v10M1 5h10M2.500 1.500l7 7M9.500 1.500l-7 7" stroke="#e6e25a" strokeWidth=".9" />
          <path d="M6 6q1.500-1.500 3.500.5L14 11l3-2q5 0 6 3l2 6-3 4-8-1-4-5 2-1-6-6.500Q5 7.500 6 6z" fill="#f3d3b9" stroke="#b98e70" strokeWidth=".8" />
        </Ic>
      </PaletteItem>
      <PaletteItem>
        <Ic>
          <path d="M8 19Q3 14 2 9l2-1 3 4L4 4l2-1 3 7L8 2l2-1 2 8 1-7h2l0 8 2-4 2 1-1 12q-4 3-10 0z" fill="#f3d3b9" stroke="#b98e70" strokeWidth=".8" />
        </Ic>
      </PaletteItem>
      <PaletteItem>
        <Ic>
          <path d="m13 13 7 7" stroke="#333" strokeWidth="3" />
          <path d="m13 13 7 7" stroke="#888" strokeWidth="1" />
          <circle cx="8" cy="8" r="6.300" fill="#e1e1e1" stroke="#444" strokeWidth="1.600" />
          <path d="M8 4.500v7M4.500 8h7" stroke="#333" strokeWidth="1.500" />
        </Ic>
      </PaletteItem>
      <PaletteItem>
        <Ic>
          <path d="m11 11 8 8" stroke="#1b1b1b" strokeWidth="3" />
          <path d="m11 11 7 7" stroke="#aaa" strokeWidth="1" />
          <circle cx="6.500" cy="6.500" r="5" fill="#474747" stroke="#2c2c2c" />
          <path d="M3 6.500h7" stroke="#eee" strokeWidth="1.600" />
        </Ic>
      </PaletteItem>
      <PaletteItem>
        <Ic>
          <path d="m13 9 6-8" stroke="#cfcfcf" strokeWidth="3.200" />
          <path d="m10 13 3-4" stroke="#f5f5f5" strokeWidth="4" />
          <path d="m6 16 4-4" stroke="#a51e1e" strokeWidth="3" />
          <path d="M1 19 6 16" stroke="#c83434" strokeWidth="1.200" />
        </Ic>
      </PaletteItem>
      <PaletteItem>
        <Ic>
          <path d="M3 18 19 2" stroke="#777" strokeWidth="2.600" />
          <path d="M3 18 19 2" stroke="#000" strokeWidth="1.600" />
          <circle cx="3" cy="18" r="1.800" fill="#000" />
          <circle cx="19" cy="2" r="1.800" fill="#000" />
        </Ic>
      </PaletteItem>
      <PaletteItem>
        <Ic>
          <text x="0" y="18" fontFamily="Liberation Serif" fontStyle="italic" fontSize="20" fill="#111" stroke="#9a9a9a" strokeWidth=".6">A</text>
          <path d="M13.500 3h7M13.500 18h7M17 3v15" stroke="#9a9a9a" strokeWidth="2.400" />
          <path d="M14 3h6M14 18h6M17 3v15" stroke="#111" strokeWidth="1.200" />
        </Ic>
      </PaletteItem>
      <PaletteItem>
        <Ic>
          <rect x="1.500" y="2" width="19" height="16" fill="#33727a" />
          <path d="M2 18h17" stroke="#3d6fb0" strokeWidth="2" strokeDasharray="2 1.500" />
          <path d="m10 15 8-2M10 15.500l8 3" stroke="#e6edf2" strokeWidth="1.300" />
        </Ic>
      </PaletteItem>
      <PaletteItem>
        <Ic>
          <rect x="1" y="5" width="20" height="11" rx="1" fill="#e4e4ea" stroke="#999" strokeWidth=".6" />
          <path d="M2.500 7.500h17M2.500 10h17M2.500 12.500h17" stroke="#77777f" strokeWidth="1.100" strokeDasharray="1.500 .8" />
          <path d="M6 14.500h10" stroke="#888" strokeWidth=".7" />
        </Ic>
      </PaletteItem>
    </Palette>

    <ZoomBadge>
      <svg width="22" height="27" viewBox="0 0 22 27" fill="none">
        <path d="m12 12 7 8" stroke="#222" strokeWidth="3" />
        <path d="m12 12 6 7" stroke="#999" strokeWidth="1.200" />
        <circle cx="7" cy="7.500" r="4.800" fill="#9a8585" stroke="#777" />
        <path d="M5 5.500h5v4H5zM5 5.500l5 4M10 5.500l-5 4" stroke="#e12222" strokeWidth="1.200" />
      </svg>
      2.0 x
    </ZoomBadge>
  </Screen>
);

export default App;
